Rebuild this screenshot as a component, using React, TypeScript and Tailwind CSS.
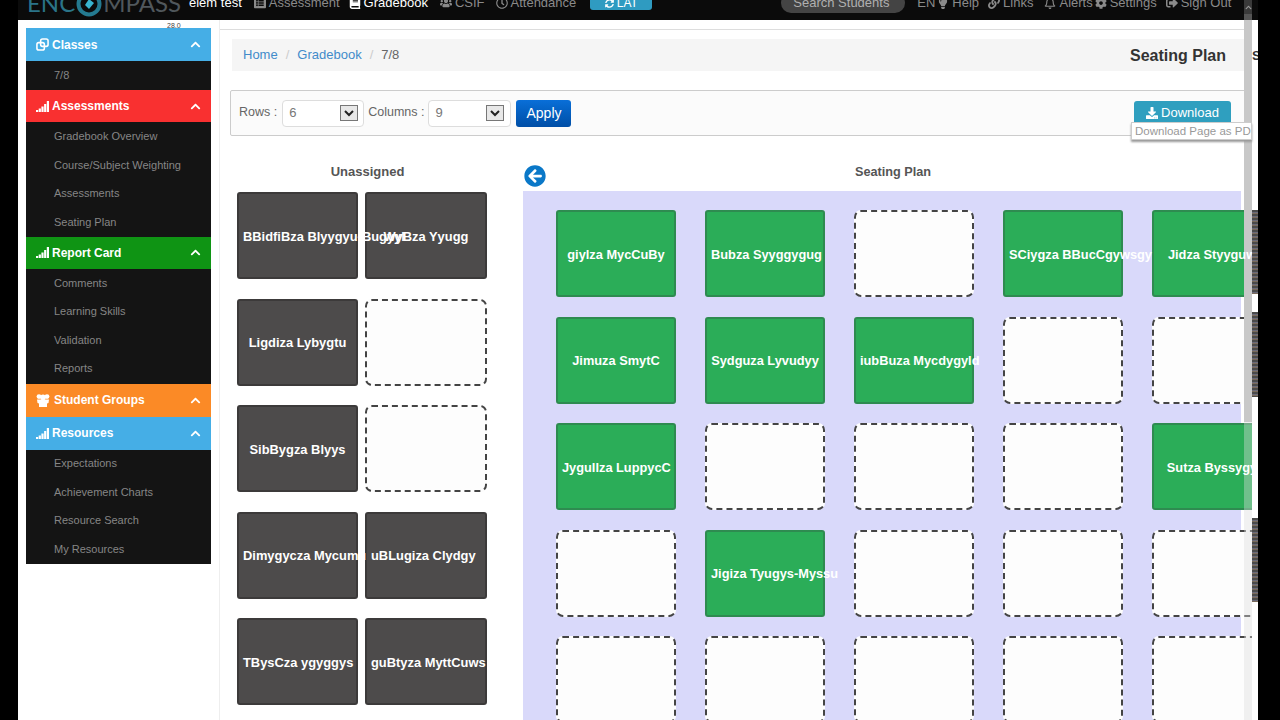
import React from "react";
import {
  FaChevronUp, FaDownload, FaArrowCircleLeft, FaRegBell, FaCog, FaSignOutAlt, FaUsers,
  FaBook, FaLightbulb, FaLink, FaRegClock, FaListAlt, FaSyncAlt,
} from "react-icons/fa";

const font = "font-['Liberation_Sans',Arial,sans-serif]";

function ClassesIcon() {
  return (
    <svg viewBox="0 0 14 14" className="w-[13px] h-[13px]" fill="none" stroke="white" strokeWidth="1.7">
      <rect x="5" y="1" width="8" height="8" rx="2" />
      <rect x="1" y="5" width="8" height="8" rx="2" />
    </svg>
  );
}

function Bars() {
  return (
    <svg viewBox="0 0 13 11" className="w-[13px] h-[11px]" fill="white">
      <rect x="0" y="9" width="2.2" height="2" />
      <rect x="2.7" y="7.5" width="2.2" height="3.5" />
      <rect x="5.4" y="5.5" width="2.2" height="5.5" />
      <rect x="8.1" y="3" width="2.2" height="8" />
      <rect x="10.8" y="0" width="2.2" height="11" />
    </svg>
  );
}

function GroupIcon() {
  return (
    <svg viewBox="0 0 14 13" className="w-[14px] h-[13px]" fill="white">
      <circle cx="3" cy="2.6" r="2.4" />
      <circle cx="11" cy="2.6" r="2.4" />
      <circle cx="7" cy="3.4" r="2.8" />
      <path d="M1 5.5 H13 L12.5 9 L11 9.5 V13 H3 V9.5 L1.5 9 Z" />
    </svg>
  );
}

type Section = { title: string; bg: string; icon: React.ReactNode; items: string[]; h: string };

const sections: Section[] = [
  { title: "Classes", bg: "bg-[#45aee6]", icon: <ClassesIcon />, items: ["7/8"], h: "h-[33px]" },
  { title: "Assessments", bg: "bg-[#f93030]", icon: <Bars />, items: ["Gradebook Overview", "Course/Subject Weighting", "Assessments", "Seating Plan"], h: "h-[32px]" },
  { title: "Report Card", bg: "bg-[#0f9414]", icon: <Bars />, items: ["Comments", "Learning Skills", "Validation", "Reports"], h: "h-[32px]" },
  { title: "Student Groups", bg: "bg-[#fb8a26]", icon: <GroupIcon />, items: [], h: "h-[33px]" },
  { title: "Resources", bg: "bg-[#45aee6]", icon: <Bars />, items: ["Expectations", "Achievement Charts", "Resource Search", "My Resources"], h: "h-[33px]" },
];

function Sidebar() {
  return (
    <div className="w-[185px] shrink-0 ml-2 mt-2 self-start bg-[#141414]">
      {sections.map((s) => (
        <div key={s.title}>
          <div className={`${s.bg} ${s.h} flex items-center pl-[10px] pr-[9px] text-white font-bold text-[12px]`}>
            <span className="w-[16px] flex items-center">{s.icon}</span>
            <span className={s.title === "Student Groups" ? "ml-[2px]" : ""}>{s.title}</span>
            <FaChevronUp className="ml-auto w-[13px] h-[11px] text-white" />
          </div>
          {s.items.length > 0 && (
            <div className="pb-[1px]">
              {s.items.map((it) => (
                <div key={it} className="h-[28.4px] flex items-center pl-[28px] text-[11px] text-[#868686]">{it}</div>
              ))}
            </div>
          )}
        </div>
      ))}
    </div>
  );
}

function NavItem({ icon, label, white, ml }: { icon?: React.ReactNode; label: string; white?: boolean; ml: string }) {
  return (
    <div className={`flex items-center gap-[3px] text-[13px] whitespace-nowrap shrink-0 ${ml} ${white ? "text-white" : "text-[#8a8a8a]"}`}>
      {icon}
      <span>{label}</span>
    </div>
  );
}

const ic = "w-[12px] h-[12px]";

function TopBar() {
  return (
    <div className="h-5 shrink-0 overflow-hidden bg-[#0b0b0b]">
      <div className="flex items-center h-[6px] w-[1240px]">
        <div className="ml-[9px] w-[154px] shrink-0 flex items-center text-[24px] font-['Lato',sans-serif] whitespace-nowrap">
          <span className="text-[#2a7488]">ENC</span>
          <svg viewBox="0 0 26 26" className="w-[26px] h-[26px] shrink-0 mx-[1px] mt-[1px]">
            <circle cx="13" cy="13" r="10.5" fill="none" stroke="#247a90" strokeWidth="4" />
            <path d="M13 8 L18 12 L13 18 L9 14 Z" fill="#38b4cf" />
          </svg>
          <span className="text-[#50575c]">MPASS</span>
        </div>
        <NavItem label="elem test" white ml="ml-[8px]" />
        <NavItem icon={<FaListAlt className={ic} />} label="Assessment" ml="ml-[12px]" />
        <NavItem icon={<FaBook className={ic} />} label="Gradebook" white ml="ml-[9px]" />
        <NavItem icon={<FaUsers className={ic} />} label="CSIF" ml="ml-[12px]" />
        <NavItem icon={<FaRegClock className={ic} />} label="Attendance" ml="ml-[11px]" />
        <div className="ml-[14px] w-[62px] h-[14px] shrink-0 bg-[#2f9bc1] rounded-[3px] flex items-center justify-center gap-[3px] text-white text-[12px]">
          <FaSyncAlt className="w-[9px] h-[9px]" /> LAT
        </div>
        <div className="ml-[129px] w-[124px] h-[20px] shrink-0 bg-[#444] rounded-[10px] flex items-center pl-[12px] text-[13px] text-[#b0b0b0] whitespace-nowrap">
          Search Students
        </div>
        <NavItem label="EN" ml="ml-[12px]" />
        <NavItem icon={<FaLightbulb className={ic} />} label="Help" ml="ml-[2px]" />
        <NavItem icon={<FaLink className={ic} />} label="Links" ml="ml-[9px]" />
        <NavItem icon={<FaRegBell className={ic} />} label="Alerts" ml="ml-[11px]" />
        <NavItem icon={<FaCog className={ic} />} label="Settings" ml="ml-[2px]" />
        <NavItem icon={<FaSignOutAlt className={ic} />} label="Sign Out" ml="ml-[9px]" />
      </div>
    </div>
  );
}

function FakeSelect({ value, w, pr }: { value: string; w: string; pr: string }) {
  return (
    <div className={`${w} ${pr} h-[27px] border border-[#ddd] rounded-[4px] bg-white flex items-center justify-between pl-[6px] text-[13px] text-[#777]`}>
      <span>{value}</span>
      <span className="w-[18px] h-[16px] border border-[#777] bg-[#e8e8e8] flex items-center justify-center">
        <svg viewBox="0 0 10 10" className="w-[10px] h-[10px]" fill="none" stroke="#222" strokeWidth="2">
          <path d="M1 3 L5 7 L9 3" />
        </svg>
      </span>
    </div>
  );
}

const Empty = () => <div className="h-[87px] rounded-[7px] border-2 border-dashed border-[#444] bg-[#fdfdfd]" />;

function GreyTile({ name, pad }: { name?: string; pad?: string }) {
  if (!name) return <Empty />;
  return (
    <div className="h-[87px] rounded-[3px] border-2 border-[#3c3a3a] bg-[#4d4b4b] flex items-center pt-[2px]">
      <div className={`w-full px-[4px] ${pad ?? ""} text-center whitespace-nowrap text-white font-bold text-[12.9px] relative z-10`}>{name}</div>
    </div>
  );
}

function GreenTile({ name }: { name?: string }) {
  if (!name) return <Empty />;
  return (
    <div className="h-[87px] rounded-[3px] border-2 border-[#2e8b50] bg-[#2bad58] flex items-center pt-[2px]">
      <div className="w-full px-[4px] text-center whitespace-nowrap text-white font-bold text-[12.8px] relative z-10">{name}</div>
    </div>
  );
}

const unassigned: (string | undefined)[] = [
  "BBidfiBza Blyygyu-Bugyyl", "WyBza Yyugg",
  "Ligdiza Lybygtu", undefined,
  "SibBygza Blyys", undefined,
  "Dimygycza Mycumu", "uBLugiza Clydgy",
  "TBysCza ygyggys", "guBtyza MyttCuws",
];

const seats: (string | undefined)[] = [
  "giylza MycCuBy", "Bubza Syyggygug", undefined, "SCiygza BBucCgywsgy", "Jidza Styyguw",
  "Jimuza SmytC", "Sydguza Lyvudyy", "iubBuza Mycdygyld", undefined, undefined,
  "Jygullza LuppycC", undefined, undefined, undefined, "Sutza Byssygy",
  undefined, "Jigiza Tyugys-Myssu", undefined, undefined, undefined,
  undefined, undefined, undefined, undefined, undefined,
];

const stripes = "bg-[repeating-linear-gradient(180deg,#4a4a4a_0px,#4a4a4a_2px,#6a6a7a_2px,#6a6a7a_3px,#7a6a5a_3px,#7a6a5a_4px)]";

export default function App() {
  return (
    <div className={`w-[1280px] h-[720px] overflow-hidden bg-black flex ${font}`}>
      <div className="ml-[18px] w-[1240px] h-full bg-white flex flex-col relative overflow-hidden">
        <TopBar />
        <div className="flex flex-1 min-h-0">
          <Sidebar />
          <div className="w-[1033px] ml-2 border-l border-[#eee] overflow-hidden relative">
            <div className="mt-[9px] border-t border-[#ddd] h-[10px]" />
            <div className="ml-[12px] w-[1018px] h-[32px] bg-[#f5f5f5] flex items-center pl-[11px] pr-[24px] text-[13px] whitespace-nowrap">
              <span className="text-[#428bca]">Home</span>
              <span className="mx-[8px] text-[#ccc]">/</span>
              <span className="text-[#428bca]">Gradebook</span>
              <span className="mx-[8px] text-[#ccc]">/</span>
              <span className="text-[#666]">7/8</span>
              <span className="ml-auto pt-[2px] text-[16px] font-bold text-[#333]">Seating Plan</span>
            </div>
            <div className="ml-[10px] mt-[19px] w-[1021px] h-[46px] border border-[#ccc] bg-[#fbfbfb] rounded-[2px] flex items-center pl-[8px] pr-[19px] text-[12.5px] text-[#666]">
              <span className="mr-[5px] -mt-[2px]">Rows :</span>
              <FakeSelect value="6" w="w-[82px]" pr="pr-[5px]" />
              <span className="ml-[4px] mr-[4px] -mt-[2px]">Columns :</span>
              <FakeSelect value="9" w="w-[83px]" pr="pr-[6px]" />
              <button className="ml-[5px] w-[55px] h-[27px] rounded-[3px] text-white text-[14px] bg-gradient-to-b from-[#0a6fd8] to-[#004ea6]">Apply</button>
              <button className="ml-auto w-[97px] h-[25px] rounded-[3px] bg-[#2f9fbf] text-white text-[13px] flex items-center justify-center gap-[3px]">
                <FaDownload className="w-[12px] h-[12px]" /> Download
              </button>
            </div>
            <div className="flex mt-[28px] pl-[17px] h-[600px]">
              <div className="w-[261px] shrink-0">
                <div className="h-[16px] flex items-center justify-center text-[13px] font-bold text-[#555]">Unassigned</div>
                <div className="mt-[12px] w-[250px] grid grid-cols-[121px_122px] gap-x-[7px] gap-y-[19.5px]">
                  {unassigned.map((n, i) => <GreyTile key={i} name={n} pad={i === 7 ? "pr-[16px]" : ""} />)}
                </div>
              </div>
              <div className="ml-[25px] w-[718px] shrink-0">
                <div className="h-[27px] flex">
                  <FaArrowCircleLeft className="w-[22px] h-[22px] text-[#0a78c8] mt-[1px] ml-[1px] -mr-[1px] shrink-0" />
                  <div className="flex-1 h-[18px] flex items-center justify-center text-[12.7px] font-bold text-[#555]">Seating Plan</div>
                </div>
                <div className="bg-[#d9d9fa] h-[573px] pt-[19px] pl-[33px]">
                  <div className="grid grid-cols-[repeat(5,120px)] gap-x-[29px] gap-y-[19.5px]">
                    {seats.map((n, i) => <GreenTile key={i} name={n} />)}
                  </div>
                </div>
              </div>
            </div>
          </div>
          <div className="w-[6px] shrink-0 bg-white" />
        </div>
        {/* page scrollbar lying over the content */}
        <div className="absolute left-[1226px] top-0 bottom-0 w-[8px] bg-[#ddd]/40">
          <div className="h-[14px] bg-[#3a3a3a] flex items-center justify-center text-[#999]">
            <FaChevronUp className="w-[7px] h-[7px]" />
          </div>
          <div className="h-[6px] bg-[#555]" />
          <div className="h-[402px] bg-[#c8c8c8]" />
        </div>
        {/* stray pixels of the window behind, at the right edge */}
        <div className={`absolute left-[1234px] top-[210px] w-[6px] h-[84px] ${stripes}`} />
        <div className={`absolute left-[1234px] top-[312px] w-[6px] h-[85px] ${stripes}`} />
        <div className={`absolute left-[1234px] top-[518px] w-[6px] h-[84px] ${stripes}`} />
        <div className="absolute left-[1234px] top-[48px] w-[6px] overflow-hidden text-[13px] font-bold text-[#333] leading-[15px]">S</div>
        <div className="absolute left-[149px] top-[22px] text-[7px] leading-[8px] text-[#444]">28.0</div>
        <div className="absolute left-[1113px] top-[122px] w-[121px] h-[18px] bg-white border border-[#ccc] shadow-[0_2px_2px_#999] text-[11.5px] text-[#999] pl-[3px] leading-[16px] whitespace-nowrap overflow-hidden">
          Download Page as PDF
        </div>
      </div>
    </div>
  );
}
